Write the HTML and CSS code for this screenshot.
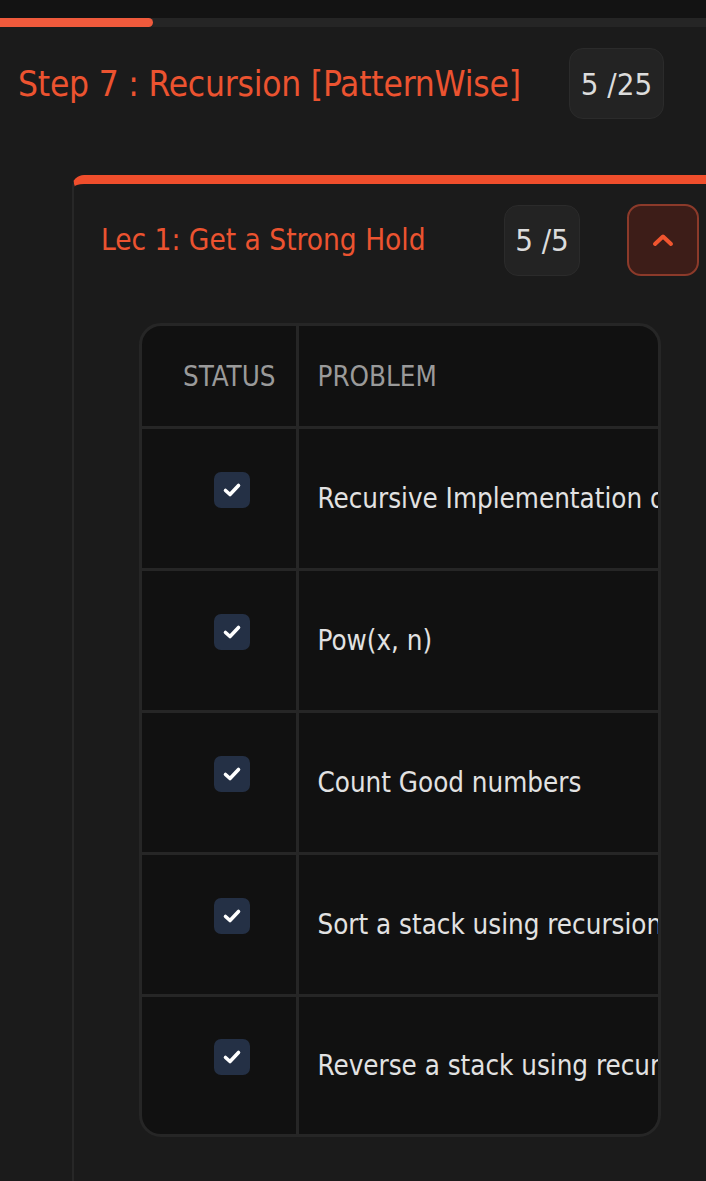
FILE: index.html
```html
<!DOCTYPE html>
<html lang="en">
<head>
<meta charset="utf-8">
<title>Step 7 : Recursion [PatternWise]</title>
<link rel="stylesheet" href="styles.css">
</head>
<body>
<div class="topbar"></div>
<div class="progress"><div class="progress-fill" style="width:153px"></div></div>
<section class="step">
  <div class="step-head">
    <h2 class="step-title">Step 7 : Recursion [PatternWise]</h2>
    <span class="badge badge-step">5 /25</span>
  </div>
  <div class="lec">
    <div class="lec-head">
      <h3 class="lec-title">Lec 1: Get a Strong Hold</h3>
      <span class="badge badge-lec">5 /5</span>
      <button class="toggle" aria-label="Collapse">
        <svg width="24" height="16" viewBox="0 0 24 16"><path d="M4 12 L12 4.5 L20 12" fill="none" stroke="#f0552f" stroke-width="4" stroke-linecap="round" stroke-linejoin="round"/></svg>
      </button>
    </div>
    <div class="table-wrap">
      <table class="problems">
        <thead>
          <tr><th class="col-status">STATUS</th><th class="col-problem">PROBLEM</th></tr>
        </thead>
        <tbody>
          <tr><td class="col-status"><span class="check"><svg width="24" height="24" viewBox="0 0 24 24"><path d="M5.5 12.5 L10 16.5 L18.5 7.5" fill="none" stroke="#fff" stroke-width="3.6" stroke-linecap="round" stroke-linejoin="round"/></svg></span></td><td class="col-problem">Recursive Implementation of atoi()</td></tr>
          <tr><td class="col-status"><span class="check"><svg width="24" height="24" viewBox="0 0 24 24"><path d="M5.5 12.5 L10 16.5 L18.5 7.5" fill="none" stroke="#fff" stroke-width="3.6" stroke-linecap="round" stroke-linejoin="round"/></svg></span></td><td class="col-problem">Pow(x, n)</td></tr>
          <tr><td class="col-status"><span class="check"><svg width="24" height="24" viewBox="0 0 24 24"><path d="M5.5 12.5 L10 16.5 L18.5 7.5" fill="none" stroke="#fff" stroke-width="3.6" stroke-linecap="round" stroke-linejoin="round"/></svg></span></td><td class="col-problem">Count Good numbers</td></tr>
          <tr><td class="col-status"><span class="check"><svg width="24" height="24" viewBox="0 0 24 24"><path d="M5.5 12.5 L10 16.5 L18.5 7.5" fill="none" stroke="#fff" stroke-width="3.6" stroke-linecap="round" stroke-linejoin="round"/></svg></span></td><td class="col-problem">Sort a stack using recursion</td></tr>
          <tr><td class="col-status"><span class="check"><svg width="24" height="24" viewBox="0 0 24 24"><path d="M5.5 12.5 L10 16.5 L18.5 7.5" fill="none" stroke="#fff" stroke-width="3.6" stroke-linecap="round" stroke-linejoin="round"/></svg></span></td><td class="col-problem">Reverse a stack using recursion</td></tr>
        </tbody>
      </table>
    </div>
  </div>
</section>
</body>
</html>
```

FILE: styles.css
```css
* { box-sizing: border-box; }
html, body {
  margin: 0;
  padding: 0;
  background: #1b1b1b;
  font-family: "DejaVu Sans Condensed", "Liberation Sans", sans-serif;
  overflow: hidden;
  height: 1181px;
}
.topbar {
  height: 18px;
  background: #131313;
}
.progress {
  height: 9px;
  background: #252525;
}
.progress-fill {
  height: 100%;
  background: #ef5a3c;
  border-radius: 0 6px 6px 0;
}
.step-head {
  display: flex;
  align-items: center;
  padding: 21px 0 0 18px;
}
.step-title {
  margin: 0;
  width: 551px;
  flex: none;
  color: #ec5330;
  font-weight: 400;
  font-size: 35px;
  letter-spacing: -0.2px;
}
.badge {
  flex: none;
  display: flex;
  align-items: center;
  justify-content: center;
  height: 71px;
  background: #232323;
  border: 1px solid #2b2b2b;
  border-radius: 14px;
  color: #dcdcdc;
  font-size: 31px;
}
.badge-step { width: 95px; }
.badge-lec { width: 76px; }
.lec {
  margin: 56px 0 0 72px;
  width: 634px;
  height: 1006px;
  border-top: 9px solid #f04e2c;
  border-left: 2px solid #272727;
  border-top-left-radius: 12px;
  background: #1b1b1b;
  overflow: hidden;
}
.lec-head {
  display: flex;
  align-items: center;
  padding: 20px 0 0 27px;
}
.lec-title {
  margin: 0;
  width: 403px;
  flex: none;
  color: #ec5330;
  font-weight: 400;
  font-size: 29.5px;
}
.toggle {
  flex: none;
  margin-left: 47px;
  width: 72px;
  height: 72px;
  display: flex;
  align-items: center;
  justify-content: center;
  background: #3d1d18;
  border: 2px solid #8c3a2a;
  border-radius: 14px;
  padding: 0;
}
.table-wrap {
  margin: 47px 0 0 65px;
  width: 522px;
  border: 3px solid #262626;
  border-radius: 22px;
  overflow: hidden;
  background: #111111;
}
.problems {
  border-collapse: collapse;
  table-layout: fixed;
  width: 516px;
}
.problems th, .problems td {
  padding: 0;
  vertical-align: middle;
  border-bottom: 3px solid #262626;
}
.problems tbody tr:last-child td { border-bottom: none; }
.problems th {
  height: 101px;
  color: #9a9a9a;
  font-weight: 400;
  font-size: 27.5px;
  text-align: left;
}
.problems td {
  height: 142px;
  color: #e2e2e2;
  font-size: 27.5px;
  white-space: nowrap;
  overflow: hidden;
}
.problems tbody tr:last-child td { height: 139px; }
.col-status {
  width: 155px;
  border-right: 3px solid #262626;
}
th.col-status { padding-right: 20px; text-align: right; }
td.col-status { padding-right: 46px; text-align: right; }
th.col-problem, td.col-problem { padding-left: 19px; }
.check {
  display: inline-flex;
  align-items: center;
  justify-content: center;
  width: 36px;
  height: 36px;
  background: #243045;
  border-radius: 7px;
  margin-bottom: 16px;
  vertical-align: middle;
}
```
